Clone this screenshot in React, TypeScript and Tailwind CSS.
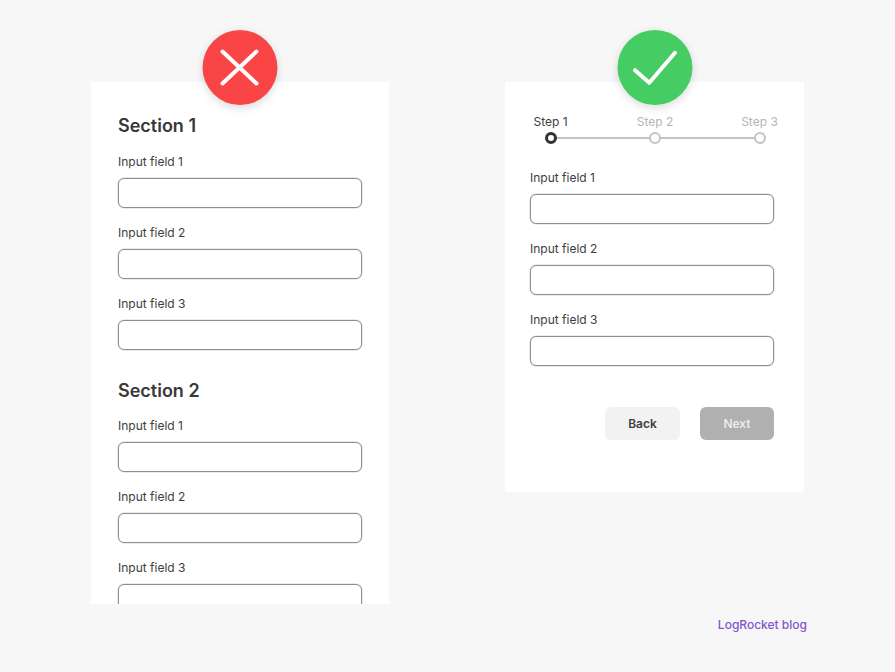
import React from 'react';

const Field = ({ label }: { label: string }) => (
  <div className="mb-[15px]">
    <div className="mb-[6px] text-[12px] leading-[20px] text-[#3d3d3d]">{label}</div>
    <div className="h-[30px] w-[244px] rounded-[6px] border border-[#8f8f8f] bg-white shadow-[0_0_0_0.5px_#d6d6d6]" />
  </div>
);

const Section = ({ title }: { title: string }) => (
  <div className="mb-[27px]">
    <h2 className="mb-[11.5px] text-[18px] font-semibold leading-[28px] text-[#383838]">{title}</h2>
    <Field label="Input field 1" />
    <Field label="Input field 2" />
    <Field label="Input field 3" />
  </div>
);

const Badge = ({ color, children }: { color: string; children: React.ReactNode }) => (
  <div
    className={`absolute -top-[52px] left-1/2 h-[75px] w-[75px] -translate-x-1/2 rounded-full shadow-[0_3px_10px_rgba(0,0,0,0.14)] ${color}`}
  >
    <svg width="75" height="75" viewBox="0 0 75 75" fill="none" stroke="white" strokeWidth="4" strokeLinecap="round" strokeLinejoin="round">
      {children}
    </svg>
  </div>
);

const Step = ({ label, active }: { label: string; active?: boolean }) => (
  <div className="relative z-10 flex w-[37px] flex-col items-center">
    <span className={`whitespace-nowrap text-[12px] leading-[20px] ${active ? 'text-[#3d3d3d]' : 'text-[#b5b5b5]'}`}>
      {label}
    </span>
    <span
      className={`h-[12px] w-[12px] rounded-full bg-white ${active ? 'border-[3px] border-[#333333]' : 'border-2 border-[#c4c4c4]'}`}
    />
  </div>
);

export default function App() {
  return (
    <div
      className="flex h-[672px] w-[895px] flex-col bg-[#f7f7f7] pt-[82px]"
      style={{ fontFamily: 'Inter, "Noto Sans", sans-serif' }}
    >
      <div className="flex items-start gap-[116px] pl-[91px]">
        <div className="relative h-[522px] w-[298px] bg-white">
          <Badge color="bg-[#f94545]">
            <path d="M20 21.5L54 53.5M54 21.5L20 53.5" />
          </Badge>
          <div className="h-full overflow-hidden pl-[27px] pt-[30px]">
            <Section title="Section 1" />
            <Section title="Section 2" />
          </div>
        </div>

        <div className="relative h-[410px] w-[299px] bg-white pl-[25px] pt-[30px]">
          <Badge color="bg-[#45cc62]">
            <path d="M17.5 40.2L31.8 52.8L57.5 22.8" />
          </Badge>
          <div className="relative mb-[24px] ml-[2px] flex w-[246px] justify-between">
            <div className="absolute left-[18px] right-[18px] top-[25px] h-[2px] bg-[#c4c4c4]" />
            <Step label="Step 1" active />
            <Step label="Step 2" />
            <Step label="Step 3" />
          </div>
          <Field label="Input field 1" />
          <Field label="Input field 2" />
          <Field label="Input field 3" />
          <div className="mt-[41px] flex w-[244px] justify-end gap-[20px]">
            <button className="h-[33px] w-[75px] rounded-[6px] bg-[#f2f2f2] text-[12px] font-semibold text-[#3d3d3d]">Back</button>
            <button className="h-[33px] w-[74px] rounded-[6px] bg-[#b0b0b0] text-[12px] font-semibold text-[#ebebeb]">Next</button>
          </div>
        </div>
      </div>
      <div className="mt-[11px] pr-[88px] text-right text-[12px] font-medium leading-[20px] text-[#8256cc]">LogRocket blog</div>
    </div>
  );
}
